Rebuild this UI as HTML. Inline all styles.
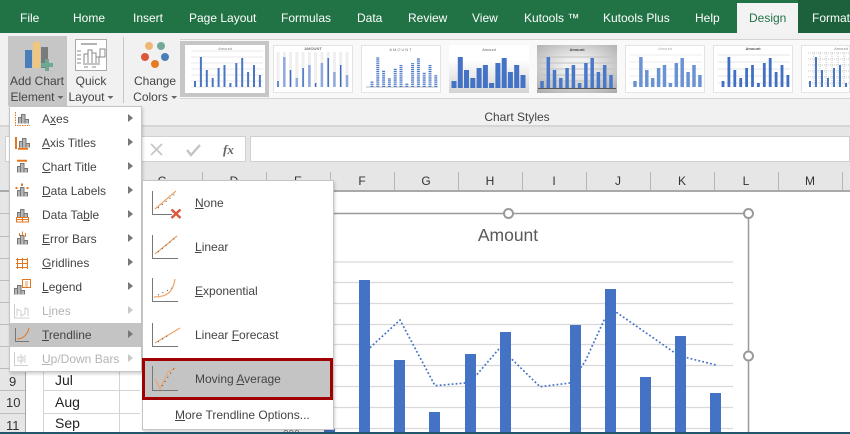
<!DOCTYPE html>
<html><head><meta charset="utf-8"><style>
html,body{margin:0;padding:0;background:#fff}
#p{position:relative;width:850px;height:434px;overflow:hidden;background:#fff;font-family:"Liberation Sans",sans-serif;font-size:12px;color:#444}
#p div,#p span.a,#p svg{position:absolute}
.t{position:absolute;top:11px;color:#fff;white-space:nowrap;line-height:14px}
.c{position:absolute;transform:translateX(-50%);white-space:nowrap;line-height:15px;color:#444}
.m{position:absolute;white-space:nowrap;line-height:14px;color:#444}
.ar{position:absolute;width:0;height:0;border-left:5px solid #777;border-top:4.5px solid transparent;border-bottom:4.5px solid transparent}
.h{position:absolute;transform:translateX(-50%);top:174px;line-height:14px;color:#333;white-space:nowrap}
.cv{display:inline-block;width:0;height:0;border-left:3px solid transparent;border-right:3px solid transparent;border-top:3.5px solid #666;vertical-align:middle;margin-left:3px}
.b{left:0;top:0}
text{font-family:"Liberation Sans",sans-serif}
</style></head><body><div id="p">
<!-- title / tabs -->
<div style="left:0;top:0;width:850px;height:33px;background:#217346"></div>
<div style="left:798px;top:0;width:52px;height:33px;background:#1c613b"></div>
<div style="left:737px;top:3px;width:61px;height:30px;background:#f3f3f3"></div>
<span class="t" style="left:20px">File</span><span class="t" style="left:73px">Home</span><span class="t" style="left:133px">Insert</span><span class="t" style="left:189px">Page Layout</span><span class="t" style="left:281px">Formulas</span><span class="t" style="left:357px">Data</span><span class="t" style="left:408px">Review</span><span class="t" style="left:472px">View</span><span class="t" style="left:524px">Kutools ™</span><span class="t" style="left:603px">Kutools Plus</span><span class="t" style="left:695px">Help</span><span class="t" style="left:749px;color:#217346">Design</span><span class="t" style="left:812px">Format</span>
<!-- ribbon -->
<div style="left:0;top:33px;width:850px;height:92px;background:#f1f1f1;border-bottom:2px solid #d6d6d6"></div>
<div style="left:8px;top:36px;width:59px;height:70px;background:#c6c6c6"></div>
<div style="left:123px;top:37px;width:1px;height:66px;background:#c6c6c6"></div>
<div style="left:180px;top:39px;width:670px;height:60px;background:#f9f9f9;border-top:1px solid #d4d4d4;border-bottom:1px solid #d4d4d4;box-sizing:border-box"></div>
<!-- add chart icon -->
<svg style="left:20px;top:38px" width="40" height="36"><rect x="5" y="12" width="7" height="18" fill="#4a7eba"/><rect x="13" y="4" width="7" height="26" fill="#f0c67c"/><rect x="21" y="9" width="7" height="21" fill="#7a7a7a"/><path d="M25 21h4v4h4v4h-4v4h-4v-4h-4v-4h4z" fill="#6fa892"/></svg>
<!-- quick layout icon -->
<svg style="left:75px;top:39px" width="33" height="33"><rect x=".5" y=".5" width="31" height="31" fill="#fff" stroke="#aaa"/><path d="M6 5h16" stroke="#999" stroke-width="1.500"/><path d="M9 24V15h4M13 24V11h4v13M17 24V14h4v10M21 24V18h3v6M2 12h4M2 16h4M2 20h4M2 24h4M8 25h17M9 28h4M17 28h4" stroke="#888" fill="none"/><rect x="25" y="10" width="5" height="8" fill="none" stroke="#888"/></svg>
<!-- colors -->
<svg style="left:138px;top:38px" width="34" height="34"><circle cx="11" cy="8" r="4" fill="#efb877"/><circle cx="23" cy="8" r="4" fill="#74a89b"/><circle cx="7" cy="19" r="4" fill="#d9573a"/><circle cx="27" cy="19" r="4" fill="#4a80b8"/><circle cx="17" cy="26" r="4" fill="#e67b1f"/></svg>
<span class="c" style="left:37px;top:74px">Add Chart</span><span class="c" style="left:37px;top:90px">Element<i class="cv"></i></span>
<span class="c" style="left:91px;top:74px">Quick</span><span class="c" style="left:91px;top:90px">Layout<i class="cv"></i></span>
<span class="c" style="left:155px;top:74px">Change</span><span class="c" style="left:155px;top:90px">Colors<i class="cv"></i></span>
<span class="c" style="left:517px;top:110px">Chart Styles</span>
<!-- gallery -->
<div style="left:180px;top:41px;width:89px;height:56px;background:#c6c6c6"></div>
<svg style="left:185px;top:45px;background:#fff" width="80" height="48"><path d="M6 6h72M6 12h72M6 18h72M6 24h72M6 30h72M6 36h72M6 42h72" stroke="#e2e2e2" stroke-width=".8"/><text x="40" y="5" font-size="4" text-anchor="middle" fill="#888">Amount</text><path d="M10 42V36M15.900 42V12M21.800 42V25M27.700 42V33M33.600 42V23M39.500 42V20M45.400 42V38M51.300 42V18M57.200 42V13M63.100 42V27M69 42V20M74.900 42V30" stroke="#4a76c4" stroke-width="2"/></svg>
<svg style="left:273px;top:45px;background:#fff;outline:1px solid #e4e4e4;outline-offset:-1px" width="80" height="48"><path d="M5 7V42M11.300 7V42M17.500 7V42M23.800 7V42M30.100 7V42M36.400 7V42M42.600 7V42M48.900 7V42M55.200 7V42M61.400 7V42M67.700 7V42M74 7V42" stroke="#efefef" stroke-width="3"/><text x="40" y="5" font-size="4" font-weight="bold" text-anchor="middle" fill="#777">AMOUNT</text><path d="M5 42V36M17.500 42V25M30.100 42V23M42.600 42V38M55.200 42V13M67.700 42V20" stroke="#3f6cc0" stroke-width="1.500"/><path d="M11.300 42V12M23.800 42V33M36.400 42V20M48.900 42V18M61.400 42V27M74 42V30" stroke="#8faadc" stroke-width="2.500"/></svg>
<svg style="left:361px;top:45px;background:#fff;outline:1px solid #e4e4e4;outline-offset:-1px" width="80" height="48"><text x="40" y="6" font-size="4" text-anchor="middle" letter-spacing="1" fill="#777">AMOUNT</text><path d="M5 42h72" stroke="#ddd" stroke-width="2"/><path d="M11 42V36M16.800 42V12M22.600 42V25M28.400 42V33M34.200 42V23M40 42V20M45.800 42V38M51.600 42V18M57.400 42V13M63.200 42V27M69 42V20M74.800 42V30" stroke="#4f7ac8" stroke-width="3" stroke-dasharray="1.300 .8"/></svg>
<svg style="left:449px;top:45px" width="80" height="48"><defs><linearGradient id="g" x1="0" y1="0" x2="0" y2="1"><stop offset=".3" stop-color="#fff"/><stop offset="1" stop-color="#d4d4d4"/></linearGradient></defs><rect width="80" height="48" fill="url(#g)"/><text x="40" y="6" font-size="4" text-anchor="middle" fill="#666">Amount</text><path d="M5 43V36M11.300 43V12M17.500 43V25M23.800 43V33M30.100 43V23M36.400 43V20M42.600 43V38M48.900 43V18M55.200 43V13M61.400 43V27M67.700 43V20M74 43V30" stroke="#4472c4" stroke-width="5"/></svg>
<svg style="left:537px;top:45px" width="80" height="48"><defs><radialGradient id="g2" cx=".5" cy=".45" r=".75"><stop offset=".2" stop-color="#f2f2f2"/><stop offset="1" stop-color="#a8a8a8"/></radialGradient></defs><rect width="80" height="48" fill="url(#g2)"/><path d="M2 12h76M2 18h76M2 24h76M2 30h76M2 36h76" stroke="#c2c2c2"/><text x="40" y="6" font-size="4" font-weight="bold" text-anchor="middle" fill="#444">Amount</text><path d="M5 43V36M11.300 43V12M17.500 43V25M23.800 43V33M30.100 43V23M36.400 43V20M42.600 43V38M48.900 43V18M55.200 43V13M61.400 43V27M67.700 43V20M74 43V30" stroke="#4a78c8" stroke-width="3.500"/><path d="M1 43.500h78" stroke="#555"/></svg>
<svg style="left:625px;top:45px;background:#fff;outline:1px solid #e4e4e4;outline-offset:-1px" width="80" height="48"><path d="M5 10h72M5 17h72M5 24h72M5 31h72M5 38h72" stroke="#eee"/><text x="40" y="5" font-size="4" text-anchor="middle" fill="#aaa">Amount</text><path d="M10 42V36M15.900 42V12M21.800 42V25M27.700 42V33M33.600 42V23M39.500 42V20M45.400 42V38M51.300 42V18M57.200 42V13M63.100 42V27M69 42V20M74.900 42V30" stroke="#6a93d4" stroke-width="3.500"/></svg>
<svg style="left:713px;top:45px;background:#fff;outline:1px solid #e4e4e4;outline-offset:-1px" width="80" height="48"><path d="M5 10h72M5 17h72M5 24h72M5 31h72M5 38h72" stroke="#e4e4e4"/><text x="40" y="5" font-size="4" font-weight="bold" text-anchor="middle" fill="#555">Amount</text><path d="M10 42V36M15.900 42V12M21.800 42V25M27.700 42V33M33.600 42V23M39.500 42V20M45.400 42V38M51.300 42V18M57.200 42V13M63.100 42V27M69 42V20M74.900 42V30" stroke="#416fc4" stroke-width="2.800"/></svg>
<svg style="left:801px;top:45px;background:#fff;outline:1px solid #e4e4e4;outline-offset:-1px" width="49" height="48"><path d="M7 8h42M7 14h42M7 20h42M7 26h42M7 32h42M7 38h42M13 7v35M19 7v35M25 7v35M31 7v35M37 7v35M43 7v35" stroke="#bbb" stroke-width=".8" stroke-dasharray="1 1"/><text x="40" y="5" font-size="4" text-anchor="middle" fill="#888">Amount</text><path d="M9 42V36M15 42V12M21 42V25M27 42V33M33 42V23M39 42V20M45 42V38" stroke="#4a78c8" stroke-width="2"/></svg>
<!-- formula bar -->
<div style="left:0;top:127px;width:850px;height:64px;background:#e6e6e6"></div>
<div style="left:5px;top:136px;width:241px;height:26px;background:#fff;border:1px solid #d0d0d0;box-sizing:border-box"></div>
<div style="left:250px;top:136px;width:600px;height:26px;background:#fff;border:1px solid #d0d0d0;box-sizing:border-box"></div>
<svg style="left:150px;top:142px" width="90" height="16"><path d="M1 2l11 11M12 2L1 13" stroke="#c4c4c4" stroke-width="1.600" fill="none"/><path d="M37 8l4 5 9-10" stroke="#c4c4c4" stroke-width="2.400" fill="none"/></svg>
<span class="m" style="left:223px;top:142px;font:italic bold 13px 'Liberation Serif',serif;color:#666">fx</span>
<!-- column headers -->
<div style="left:0;top:190px;width:850px;height:2px;background:#a9a9a9"></div>
<div style="left:202px;top:172px;width:1px;height:18px;background:#b5b5b5"></div><div style="left:266px;top:172px;width:1px;height:18px;background:#b5b5b5"></div><div style="left:330px;top:172px;width:1px;height:18px;background:#b5b5b5"></div><div style="left:394px;top:172px;width:1px;height:18px;background:#b5b5b5"></div><div style="left:458px;top:172px;width:1px;height:18px;background:#b5b5b5"></div><div style="left:522px;top:172px;width:1px;height:18px;background:#b5b5b5"></div><div style="left:586px;top:172px;width:1px;height:18px;background:#b5b5b5"></div><div style="left:650px;top:172px;width:1px;height:18px;background:#b5b5b5"></div><div style="left:714px;top:172px;width:1px;height:18px;background:#b5b5b5"></div><div style="left:778px;top:172px;width:1px;height:18px;background:#b5b5b5"></div><div style="left:842px;top:172px;width:1px;height:18px;background:#b5b5b5"></div>
<span class="h" style="left:162px">C</span><span class="h" style="left:234px">D</span><span class="h" style="left:298px">E</span><span class="h" style="left:362px">F</span><span class="h" style="left:426px">G</span><span class="h" style="left:490px">H</span><span class="h" style="left:554px">I</span><span class="h" style="left:618px">J</span><span class="h" style="left:682px">K</span><span class="h" style="left:746px">L</span><span class="h" style="left:810px">M</span>
<!-- row headers & cells -->
<div style="left:0;top:192px;width:25px;height:242px;background:#e6e6e6;border-right:1px solid #a9a9a9"></div>
<svg style="left:0;top:192px" width="140" height="242"><path d="M0 21.500h9M0 44.500h9M0 66.500h9M0 88.500h9M0 110.500h9M0 132.500h9M0 154.500h9M0 176.500h9M0 198.500H25M0 221.500H25" stroke="#bdbdbd"/><path d="M43.500 180V242M119.500 180V242M44 198.500H140M44 221.500H140" stroke="#d4d4d4"/></svg>
<span class="m" style="left:9px;top:375px;font-size:13px;color:#333">9</span><span class="m" style="left:6px;top:396px;font-size:13px;color:#333">10</span><span class="m" style="left:6px;top:419px;font-size:13px;color:#333">11</span>
<span class="m" style="left:55px;top:373px;font-size:14px;color:#222">Jul</span><span class="m" style="left:55px;top:395px;font-size:14px;color:#222">Aug</span><span class="m" style="left:55px;top:416px;font-size:14px;color:#222">Sep</span>
<!-- chart -->
<svg style="left:300px;top:205px" width="550" height="229">
<path d="M0 8.500H448.500M448.500 8.500V229" stroke="#9a9a9a" stroke-width="1.500" fill="none"/>
<path d="M0 57H433M0 77.500H433M0 98.500H433M0 119.500H433M0 139.500H433M0 160.500H433M0 181.500H433M0 202.500H433M0 223.500H433" stroke="#d9d9d9" stroke-width="1.200"/>
<path d="M70 142.700L100 115L135 180.700L165 178L176 170.600L200 142.700L240 181.700L270 178L285 156.700L305 113L317 107.700L375 148L387 152.700L416 160" fill="none" stroke="#4472c4" stroke-width="1.700" stroke-dasharray="1.800 2.200"/>
<g fill="#4472c4"><rect x="24" y="224" width="11" height="5"/><rect x="59" y="75" width="11" height="154"/><rect x="94" y="155" width="11" height="74"/><rect x="129" y="207" width="11" height="22"/><rect x="165" y="149" width="11" height="80"/><rect x="200" y="127" width="11" height="102"/><rect x="270" y="120" width="11" height="109"/><rect x="305" y="84" width="11" height="145"/><rect x="340" y="172" width="11" height="57"/><rect x="375" y="131" width="11" height="98"/><rect x="410" y="188" width="11" height="41"/></g>
<g fill="#fff" stroke="#9a9a9a" stroke-width="2"><circle cx="208.500" cy="8.500" r="4.500"/><circle cx="448.500" cy="8.500" r="4.500"/><circle cx="448.500" cy="151" r="4.500"/></g>
</svg>
<span class="c" style="left:508px;top:225px;font-size:17.500px;line-height:20px;color:#595959">Amount</span>
<!-- menu 1 -->
<div style="left:9px;top:106px;width:133px;height:266px;background:#fff;border:1px solid #c6c6c6;box-sizing:border-box;box-shadow:1px 2px 3px rgba(0,0,0,.18)"></div>
<div style="left:10px;top:323px;width:131px;height:24px;background:#c4c4c4"></div>
<svg class="b" width="40" height="372" fill="none" stroke-width="1">
<g fill="#b5b5b5" stroke="#777">
<path transform="translate(18.500,114.500)" d="M0 9V3h3v6M3 9V0h3.500v9M6.500 9V5H10V9"/>
<path transform="translate(19.500,138.500)" d="M0 9V3h3v6M3 9V0h3.500v9M6.500 9V5H10V9"/>
<path transform="translate(17.500,163.500)" d="M0 9V3h3v6M3 9V0h3.500v9M6.500 9V5H10V9"/>
<path transform="translate(17.500,187.500)" d="M0 9V3h3v6M3 9V0h3.500v9M6.500 9V5H10V9"/>
<path transform="translate(17.500,209.500)" d="M0 8V3h3v5M3 8V0h3.500v8M6.500 8V4H10V8"/>
<path transform="translate(17.500,235.500)" d="M0 9V3h3v6M3 9V0h3.500v9M6.500 9V5H10V9"/>
<path transform="translate(14.500,285.500)" d="M0 9V3h3v6M3 9V0h3.500v9M6.500 9V5H10V9"/>
</g>
<g stroke="#e3761f">
<path d="M15.500 112v13.500H30" stroke-dasharray="1.500 1"/>
<path d="M16 137v12M18 148.700h10M17 160.700h10" stroke-width="2"/>
<path d="M22 183.500v2.500M16.500 187v2M27.500 187v2" stroke-width="2"/>
<path d="M16.500 217.500h12v4.500h-12zM16.500 219.500h12M22.500 217.500v4.500"/>
<path d="M19.500 233v3M22.500 231.500v4M25.500 233v4"/>
<path d="M16 259.500h12M16 263.500h12M16 267.500h12M17.500 258v11M22.500 258v11M27.500 258v11"/>
<rect x="22.500" y="279.500" width="8" height="8" fill="#fff"/><path d="M25 282h3M25 284h3M25 286h3" stroke-width=".8"/>
</g>
<path d="M14.500 304v14h15M17 316v-7l4 2v5l4-2 0-6 3 1v7" stroke="#cfcfcf"/>
<path d="M15.500 328v13.500H29" stroke="#777"/><path d="M17 339c5 0 10-3 12-11" stroke="#e3761f"/>
<path d="M14.500 352v13.500H28M21 354v10M18 357h5v4h-5zM25 355v8" stroke="#cfcfcf"/>
</svg>
<span class="m" style="left:42px;top:112px">A<u>x</u>es</span>
<span class="m" style="left:42px;top:136px"><u>A</u>xis Titles</span>
<span class="m" style="left:42px;top:160px"><u>C</u>hart Title</span>
<span class="m" style="left:42px;top:184px"><u>D</u>ata Labels</span>
<span class="m" style="left:42px;top:208px">Data Ta<u>b</u>le</span>
<span class="m" style="left:42px;top:232px"><u>E</u>rror Bars</span>
<span class="m" style="left:42px;top:256px"><u>G</u>ridlines</span>
<span class="m" style="left:42px;top:280px"><u>L</u>egend</span>
<span class="m" style="left:42px;top:304px;color:#b4b4b4">L<u>i</u>nes</span>
<span class="m" style="left:42px;top:328px"><u>T</u>rendline</span>
<span class="m" style="left:42px;top:352px;color:#b4b4b4"><u>U</u>p/Down Bars</span>
<i class="ar" style="left:128px;top:114px"></i><i class="ar" style="left:128px;top:138px"></i><i class="ar" style="left:128px;top:162px"></i><i class="ar" style="left:128px;top:186px"></i><i class="ar" style="left:128px;top:210px"></i><i class="ar" style="left:128px;top:234px"></i><i class="ar" style="left:128px;top:258px"></i><i class="ar" style="left:128px;top:282px"></i><i class="ar" style="left:128px;top:306px;border-left-color:#c8c8c8"></i><i class="ar" style="left:128px;top:330px"></i><i class="ar" style="left:128px;top:354px;border-left-color:#c8c8c8"></i>
<!-- menu 2 -->
<div style="left:142px;top:180px;width:192px;height:250px;background:#fff;border:1px solid #c6c6c6;box-sizing:border-box;box-shadow:1px 2px 3px rgba(0,0,0,.18)"></div>
<div style="left:142px;top:358px;width:191px;height:42px;background:#c4c4c4;border:3px solid #a00000;box-sizing:border-box"></div>
<svg style="left:150px;top:188px" width="34" height="210" fill="none">
<g stroke="#777"><path d="M2.500 3v23.500H22M2.500 47v23.500H28M2.500 90v23.500H28M2.500 135v23.500H28M2.500 178v24.500H28"/></g>
<g stroke="#efa56b" stroke-width="1.200"><path d="M5 21L26 3M5 66L27 48M4 109c12 0 19-4 21-18M5 155l25-15M5 191l5 10 8-17 8-4"/></g>
<g stroke="#444" stroke-width="1" stroke-dasharray="1 4"><path d="M8 20l17-14M8 64l17-14M8 107l14-7M8 154l12-8M12 198l12-18"/></g>
<path d="M21.500 21.500l9 8.500M30.500 21.500l-9 8.500" stroke="#d9593a" stroke-width="2.500"/>
</svg>
<span class="m" style="left:195px;top:196px"><u>N</u>one</span>
<span class="m" style="left:195px;top:240px"><u>L</u>inear</span>
<span class="m" style="left:195px;top:284px"><u>E</u>xponential</span>
<span class="m" style="left:195px;top:328px">Linear <u>F</u>orecast</span>
<span class="m" style="left:195px;top:372px">Moving <u>A</u>verage</span>
<span class="m" style="left:175px;top:408px"><u>M</u>ore Trendline Options...</span>
<span class="m" style="left:283px;top:428px;font-size:10px;color:#666">200</span>
<div style="left:0;top:432px;width:850px;height:2px;background:#24566b"></div>
</div></body></html>
